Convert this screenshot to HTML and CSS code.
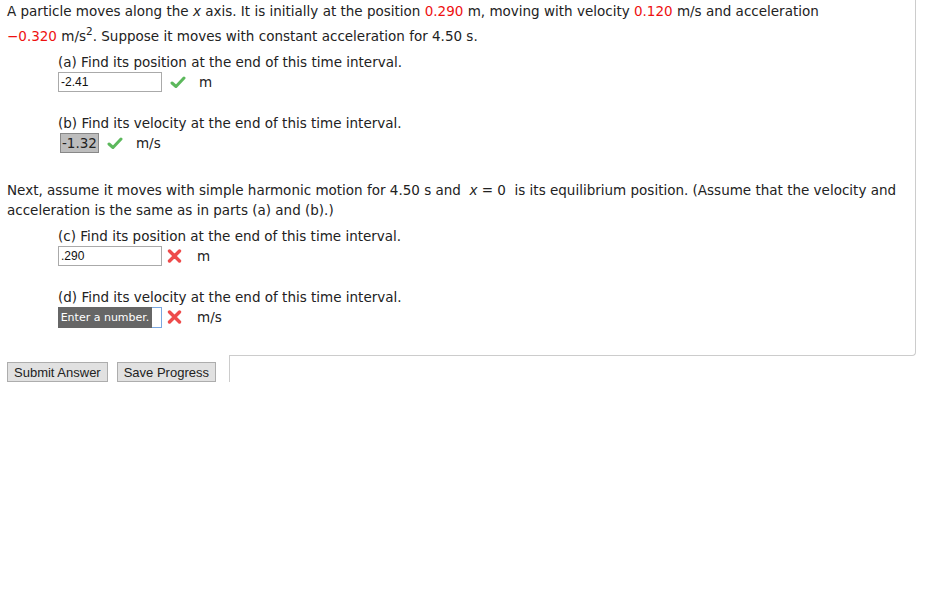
FILE: index.html
```html
<!DOCTYPE html>
<html lang="en">
    <head>
        <meta charset="UTF-8" />
        <title>Question</title>
        <link rel="stylesheet" href="styles.css">
    </head>
    <body>
        <div class="question">
            <p class="text">
                A particle moves along the <i>x</i> axis. It is initially at the position <span class="red">0.290</span> m, moving with velocity <span class="red">0.120</span> m/s and acceleration<br>
                <span class="red">&minus;0.320</span> m/s<sup>2</sup>. Suppose it moves with constant acceleration for 4.50 s.
            </p>

            <div class="part first">
                <div class="label">(a) Find its position at the end of this time interval.</div>
                <div class="answer">
                    <span class="field">-2.41</span>
                    <svg class="mark" width="16" height="14" viewBox="0 0 16 14"><path d="M2 8 L6 11.5 L14 3" fill="none" stroke="#5cb85c" stroke-width="3" stroke-linecap="round" stroke-linejoin="round"/></svg>
                    <span class="unit">m</span>
                </div>
            </div>

            <div class="part">
                <div class="label">(b) Find its velocity at the end of this time interval.</div>
                <div class="answer">
                    <span class="locked">-1.32</span>
                    <svg class="mark" width="16" height="14" viewBox="0 0 16 14"><path d="M2 8 L6 11.5 L14 3" fill="none" stroke="#5cb85c" stroke-width="3" stroke-linecap="round" stroke-linejoin="round"/></svg>
                    <span class="unit">m/s</span>
                </div>
            </div>

            <p class="text second">
                Next, assume it moves with simple harmonic motion for 4.50 s and &nbsp;<i>x</i> = 0&nbsp; is its equilibrium position. (Assume that the velocity and<br>
                acceleration is the same as in parts (a) and (b).)
            </p>

            <div class="part first">
                <div class="label">(c) Find its position at the end of this time interval.</div>
                <div class="answer">
                    <span class="field">.290</span>
                    <svg class="mark wrong" width="15" height="14" viewBox="0 0 15 14"><path d="M2.5 2 L12.5 12 M12.5 2 L2.5 12" fill="none" stroke="#ee4b4b" stroke-width="3.4" stroke-linecap="round"/></svg>
                    <span class="unit">m</span>
                </div>
            </div>

            <div class="part last">
                <div class="label">(d) Find its velocity at the end of this time interval.</div>
                <div class="answer">
                    <span class="field focused">
                        <span class="tip">Enter a number.</span>
                    </span>
                    <svg class="mark wrong" width="15" height="14" viewBox="0 0 15 14"><path d="M2.5 2 L12.5 12 M12.5 2 L2.5 12" fill="none" stroke="#ee4b4b" stroke-width="3.4" stroke-linecap="round"/></svg>
                    <span class="unit">m/s</span>
                </div>
            </div>
        </div>

        <div class="footer">
            <div class="buttons">
                <button>Submit Answer</button>
                <button>Save Progress</button>
            </div>
        </div>
    </body>
</html>
```

FILE: styles.css
```css
body {
    margin: 0;
    background: #fff;
    color: #222;
    font-family: 'DejaVu Sans', Verdana, sans-serif;
    font-size: 13.5px;
}

.question {
    width: 908px;
    padding: 1px 0 28px 7px;
    border-right: 1px solid #ccc;
    border-bottom: 1px solid #ccc;
    border-bottom-right-radius: 4px;
}

.text {
    margin: 0;
    line-height: 20px;
    width: 905px;
    white-space: nowrap;
}

.text.second {
    margin-top: 27px;
}

.red {
    color: #ee1111;
}

sup {
    font-size: 10.5px;
    line-height: 20px;
    vertical-align: 6px;
}

.part {
    margin: 21px 0 0 51px;
}

.part.first {
    margin-top: 6px;
}

.label {
    line-height: 20px;
}

.answer {
    display: flex;
    align-items: center;
    height: 20px;
}

.field {
    position: relative;
    box-sizing: border-box;
    width: 104px;
    height: 20px;
    border: 1px solid #aaa;
    padding-left: 2px;
    font-family: 'Liberation Sans', Arial, sans-serif;
    font-size: 12px;
    line-height: 18px;
    color: #111;
}

.field.focused {
    height: 21px;
    border-color: #7aa7e0;
}

.tip {
    position: absolute;
    left: -1px;
    top: -1px;
    bottom: -1px;
    width: 94px;
    background: #666;
    color: #fff;
    font-size: 11px;
    font-family: 'DejaVu Sans', Verdana, sans-serif;
    line-height: 21px;
    text-align: center;
}

.locked {
    box-sizing: border-box;
    height: 20px;
    margin-left: 2px;
    padding: 0 1px;
    background: #bdbdbd;
    border: 1px solid #888;
    line-height: 18px;
}

.mark {
    margin: 0 13px 0 8px;
}

.mark.wrong {
    margin: 0 15px 0 5px;
}

.footer {
    display: flex;
    margin-top: -1px;
}

.buttons {
    display: flex;
    gap: 9px;
    padding: 7px 13px 0 7px;
    background: #fff;
    border-right: 1px solid #ccc;
}

button {
    height: 20px;
    padding: 0 6px;
    background: #e1e1e1;
    border: 1px solid #adadad;
    border-radius: 0;
    font-family: 'Liberation Sans', Arial, sans-serif;
    font-size: 13px;
    color: #222;
}
```
